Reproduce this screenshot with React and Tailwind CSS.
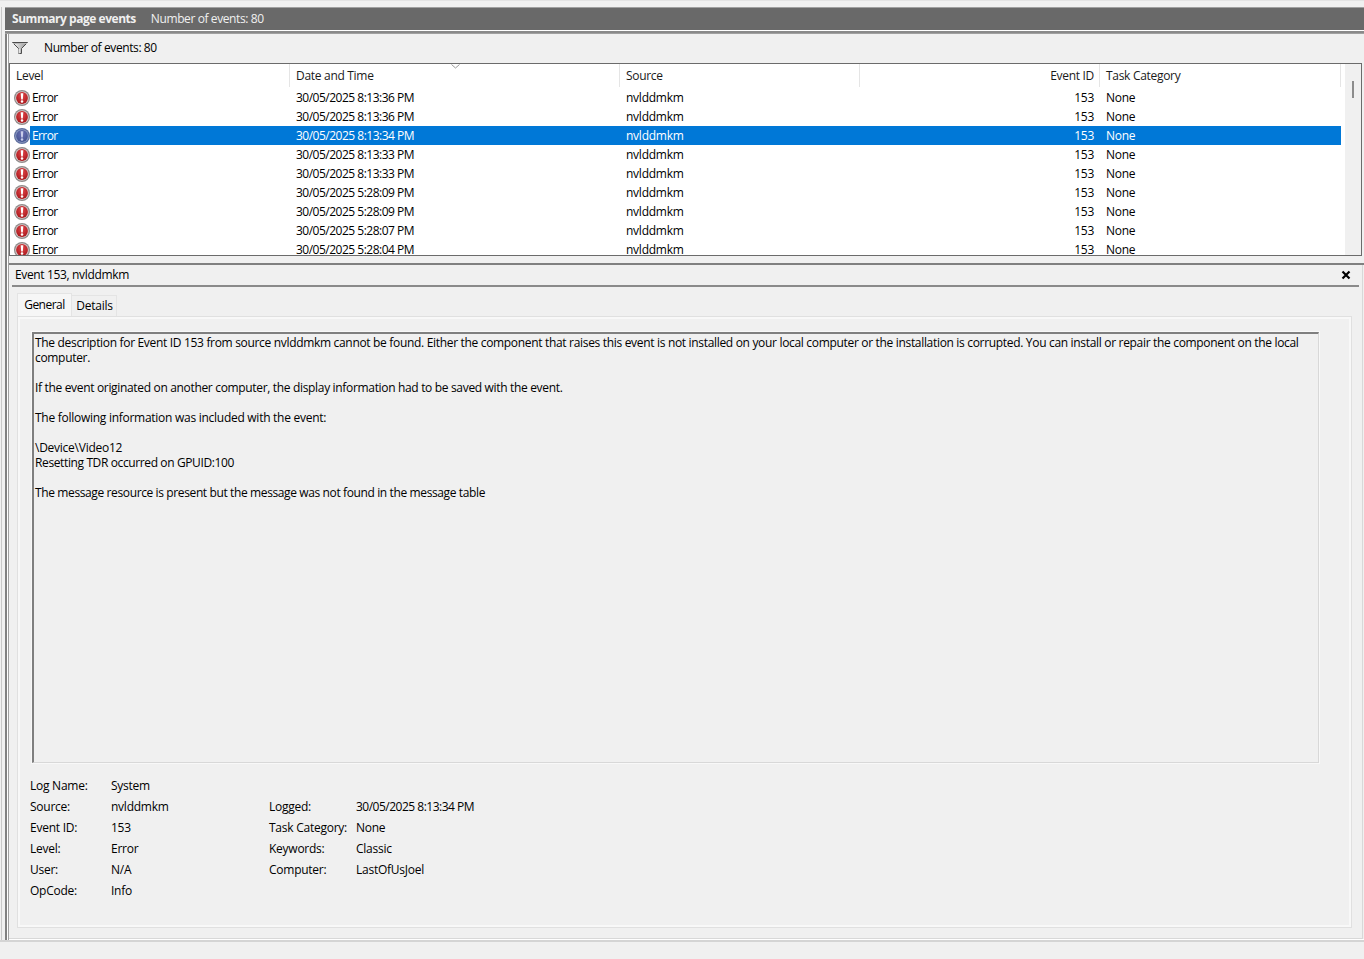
import React from 'react';

const rows = [
  ['30/05/2025 8:13:36 PM', false],
  ['30/05/2025 8:13:36 PM', false],
  ['30/05/2025 8:13:34 PM', true],
  ['30/05/2025 8:13:33 PM', false],
  ['30/05/2025 8:13:33 PM', false],
  ['30/05/2025 5:28:09 PM', false],
  ['30/05/2025 5:28:09 PM', false],
  ['30/05/2025 5:28:07 PM', false],
  ['30/05/2025 5:28:04 PM', false],
];

const metaLeft = [
  ['Log Name:', 'System'],
  ['Source:', 'nvlddmkm'],
  ['Event ID:', '153'],
  ['Level:', 'Error'],
  ['User:', 'N/A'],
  ['OpCode:', 'Info'],
];

const metaRight = [
  ['Logged:', '30/05/2025 8:13:34 PM'],
  ['Task Category:', 'None'],
  ['Keywords:', 'Classic'],
  ['Computer:', 'LastOfUsJoel'],
];

const ErrorIcon = ({ selected }) => {
  const id = selected ? 'errSel' : 'err';
  return (
    <svg width="16" height="16" viewBox="0 0 16 16" className="shrink-0">
      <defs>
        <radialGradient id={id} cx="50%" cy="35%" r="65%">
          <stop offset="0%" stopColor={selected ? '#6a6fb4' : '#e2474a'} />
          <stop offset="100%" stopColor={selected ? '#44548f' : '#a9181c'} />
        </radialGradient>
      </defs>
      <circle cx="8" cy="8" r="8" fill={selected ? '#5f6f9e' : '#8f8a8a'} />
      <circle cx="8" cy="8" r="6.8" fill={selected ? '#8f9cc4' : '#d9cccc'} />
      <circle cx="8" cy="8" r="5.9" fill={`url(#${id})`} />
      <path d="M6.7 3.2H9.3L8.8 9.4H7.2Z" fill={selected ? '#c9cdea' : '#ffffff'} />
      <circle cx="8" cy="11.4" r="1.25" fill={selected ? '#c9cdea' : '#ffffff'} />
    </svg>
  );
};

const FilterIcon = () => (
  <svg width="16" height="12" viewBox="0 0 16 12" fill="none">
    <defs>
      <linearGradient id="funnel" x1="0" x2="1" y1="0" y2="0">
        <stop offset="0%" stopColor="#ffffff" />
        <stop offset="100%" stopColor="#8c8c8c" />
      </linearGradient>
    </defs>
    <path d="M0.5 0.5H15.5L9.5 6.5V11.5H6.5V6.5Z" fill="url(#funnel)" stroke="#4d4d4d" />
    <path d="M6.5 7V11.5H7.5V7Z" fill="#ffffff" />
    <path d="M1 1H15V2H1Z" fill="#b8b8b8" />
  </svg>
);

const Header = ({ className, children }) => (
  <div className={`h-[24px] flex items-center px-1.5 pb-[1px] relative ${className}`}>
    {children}
    <div className="absolute right-0 top-0 w-[1px] h-[23px] bg-[#e5e5e5]" />
  </div>
);

export default function App() {
  return (
    <div className="w-[1364px] h-[959px] overflow-hidden bg-[#f0f0f0] text-[12px] leading-[15px] text-black font-['Open_Sans','Noto_Sans',sans-serif] tracking-[-0.25px] flex flex-col">
      <div className="h-[7px] shrink-0 border-t border-[#e3e3e3]" />
      <div className="flex-1 min-h-0 flex">
        <div className="w-[1px] shrink-0 ml-[1px] bg-[#c8c8c8]" />
        <div className="flex-1 min-w-0 ml-[3px] flex flex-col">
          {/* summary band */}
          <div className="h-[23px] shrink-0 bg-[#696969] border-t border-[#a0a0a0] pl-[7px] pb-[2px] flex items-center gap-[15px] text-[#f0f0f0]">
            <span className="font-bold tracking-[-0.46px]">Summary page events</span>
            <span className="tracking-[-0.4px]">Number of events: 80</span>
          </div>
          <div className="h-[1px] shrink-0 bg-white" />
          <div className="h-[3px] shrink-0 bg-[#8a8a8a] border-b border-[#a0a0a0]" />

          <div className="flex-1 min-h-0 flex">
            <div className="w-[4px] shrink-0 border-l-2 border-r border-l-[#808080] border-r-[#a0a0a0] bg-white" />
            <div className="flex-1 min-w-0 flex flex-col">
              {/* toolbar */}
              <div className="h-[29px] shrink-0 flex items-center pl-[4px] pb-[2px]">
                <div className="w-[31px] -ml-[1px] mr-[1px] flex items-center"><FilterIcon /></div>
                <span className="tracking-[-0.4px]">Number of events: 80</span>
              </div>

              {/* event list */}
              <div className="h-[193px] shrink-0 mr-[2px] border border-[#6b6b6b] bg-white flex overflow-hidden">
                <div className="flex-1 min-w-0 overflow-hidden relative">
                  <svg width="9" height="5" viewBox="0 0 9 5" className="absolute left-[441px] top-0" fill="none">
                    <path d="M0.5 0.5L4.5 4L8.5 0.5" stroke="#9a9a9a" />
                  </svg>
                  <div className="flex text-[#1a1a1a] tracking-[-0.3px]">
                    <Header className="w-[280px]">Level</Header>
                    <Header className="w-[330px]">Date and Time</Header>
                    <Header className="w-[240px]">Source</Header>
                    <Header className="w-[240px] justify-end">Event ID</Header>
                    <Header className="w-[241px]">Task Category</Header>
                  </div>
                  {rows.map(([date, selected], i) => (
                    <div key={i} className="h-[19px] flex items-center w-[1331px]">
                      <div className="w-[20px] pl-[4px] shrink-0 flex items-center"><ErrorIcon selected={selected} /></div>
                      <div className={`flex h-full items-center flex-1 min-w-0 ${selected ? 'bg-[#0078d7] text-white' : ''}`}>
                        <span className="w-[260px] pl-[2px] tracking-[-0.6px]">Error</span>
                        <span className="w-[330px] pl-[6px] tracking-[-0.5px]">{date}</span>
                        <span className="w-[240px] pl-[6px]">nvlddmkm</span>
                        <span className="w-[240px] pr-[6px] text-right">153</span>
                        <span className="pl-[6px]">None</span>
                      </div>
                    </div>
                  ))}
                </div>
                <div className="w-[16px] shrink-0 bg-[#f0f0f0] pt-[17px] flex justify-center">
                  <div className="w-[2px] h-[17px] bg-[#8c8c8c]" />
                </div>
              </div>

              {/* splitter */}
              <div className="h-[9px] shrink-0 border-b-2 border-[#808080]" />

              {/* preview pane */}
              <div className="flex-1 min-h-0 mr-[1px] flex flex-col border-r border-b border-[#d8d8d8]">
                <div className="h-[22px] shrink-0 ml-[3px] mr-[3px] pb-[1px] flex items-center justify-between border-b-2 border-[#8a8a8a] pl-[3px]">
                  <span className="tracking-[-0.35px]">Event 153, nvlddmkm</span>
                  <svg width="10" height="10" viewBox="0 0 10 10" className="mr-[8px]">
                    <path d="M1.5 1.5L8.5 8.5M8.5 1.5L1.5 8.5" stroke="#000000" strokeWidth="2.2" />
                  </svg>
                </div>

                <div className="flex-1 min-h-0 flex flex-col pt-[6px] pl-[8px] pr-[10px] pb-[10px]">
                  <div className="flex items-end h-[23px] shrink-0">
                    <div className="h-[23px] w-[55px] flex items-start justify-center pt-[3px] bg-[#f6f6f6] border border-b-0 border-[#e4e4e4] tracking-[-0.5px]">General</div>
                    <div className="h-[21px] w-[45px] flex items-center justify-center pl-[1px] pb-[2px] border border-b-0 border-l-0 border-[#e4e4e4]">Details</div>
                  </div>
                  <div className="flex-1 min-h-0 border border-[#e0e0e0]">
                    <div className="h-full border-2 border-[#f8f8f8] flex flex-col pl-[12px] pr-[30px] pt-[13px]">
                      <div className="h-[431px] shrink-0 border-t-2 border-l-2 border-[#7f7f7f] border-r border-b border-r-[#d8d8d8] border-b-[#d8d8d8] pl-[1px] pt-[1px] pr-[16px] tracking-[-0.38px] outline outline-1 outline-[#f8f8f8]">
                        <p className="tracking-[-0.32px]">The description for Event ID 153 from source nvlddmkm cannot be found. Either the component that raises this event is not installed on your local computer or the installation is corrupted. You can install or repair the component on the local computer.</p>
                        <p className="mt-[15px] tracking-[-0.33px]">If the event originated on another computer, the display information had to be saved with the event.</p>
                        <p className="mt-[15px] tracking-[-0.27px]">The following information was included with the event:</p>
                        <p className="mt-[15px] tracking-[-0.25px]">\Device\Video12</p>
                        <p>Resetting TDR occurred on GPUID:100</p>
                        <p className="mt-[15px]">The message resource is present but the message was not found in the message table</p>
                      </div>

                      <div className="flex mt-[15px] -ml-[2px]">
                        <div className="w-[239px] shrink-0 flex flex-col gap-[6px]">
                          {metaLeft.map(([label, value]) => (
                            <div key={label} className="flex">
                              <span className="w-[81px]">{label}</span>
                              <span>{value}</span>
                            </div>
                          ))}
                        </div>
                        <div className="flex flex-col gap-[6px] pt-[21px]">
                          {metaRight.map(([label, value]) => (
                            <div key={label} className="flex">
                              <span className="w-[87px]">{label}</span>
                              <span className={label === 'Logged:' ? 'tracking-[-0.5px]' : ''}>{value}</span>
                            </div>
                          ))}
                        </div>
                      </div>
                    </div>
                  </div>
                </div>
              </div>
              <div className="h-[1px] shrink-0 bg-white" />
            </div>
          </div>
        </div>
      </div>
      <div className="h-[19px] shrink-0 border-t-2 border-[#d4d4d4]" />
    </div>
  );
}
